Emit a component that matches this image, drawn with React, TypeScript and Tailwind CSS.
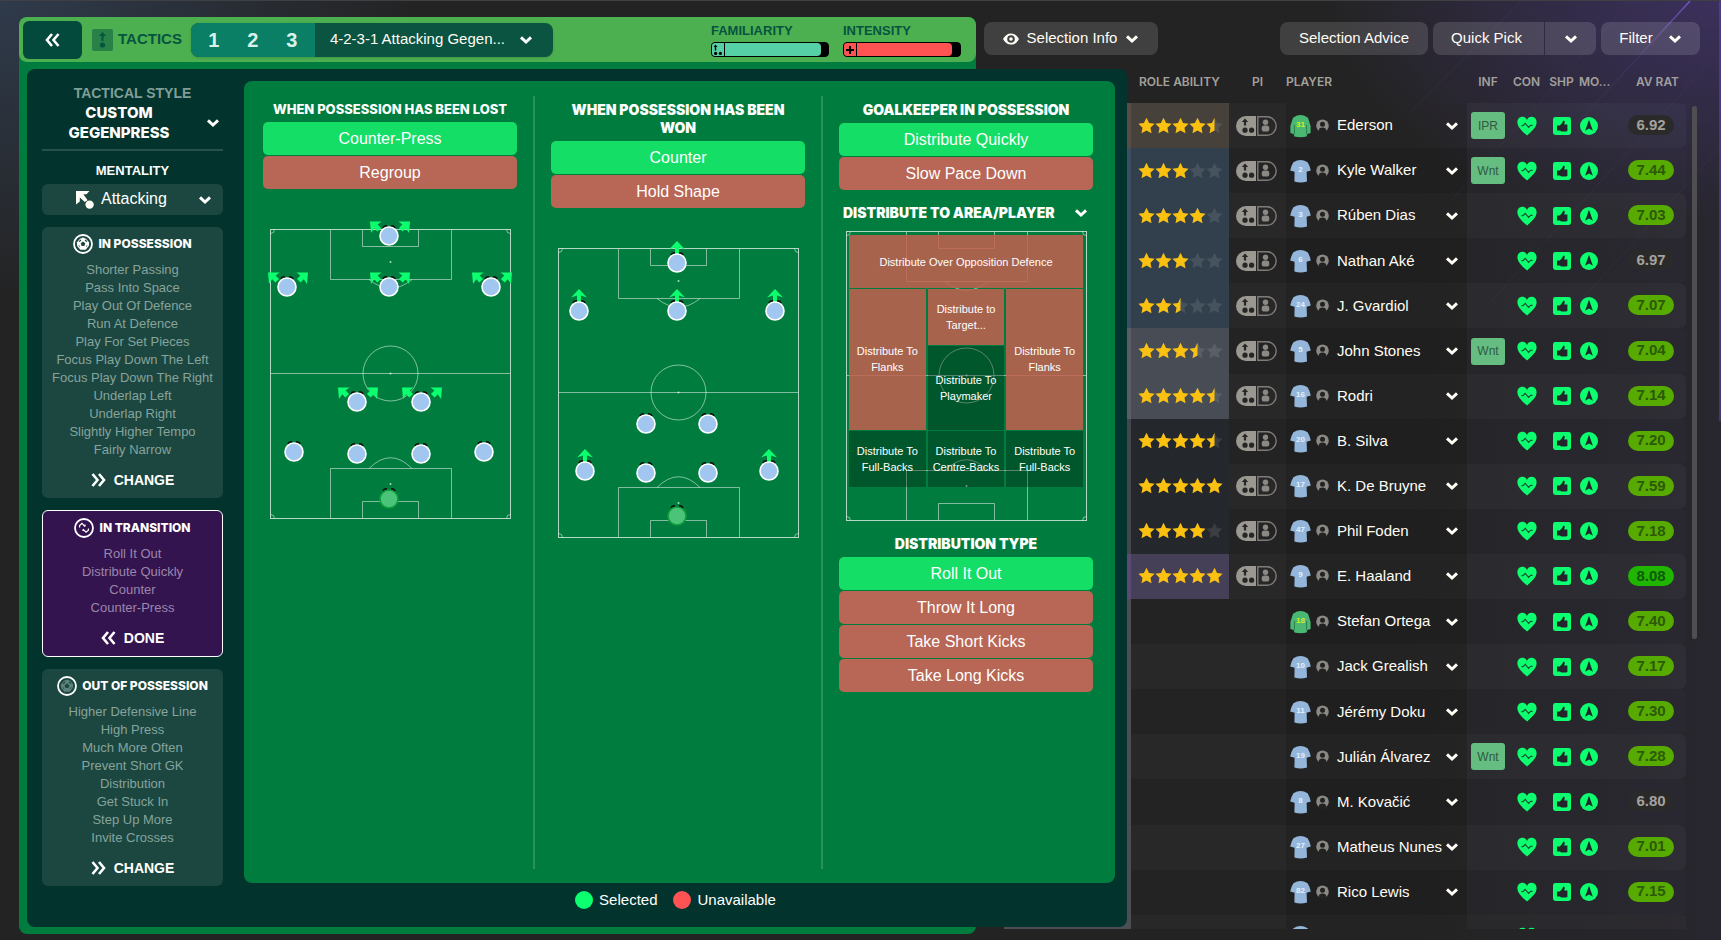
import React from 'react';
import clsx from 'clsx';

type Group = 'gk' | 'def' | 'mid' | 'am' | 'st' | 'none';

interface Player {
  name: string;
  shirt: number;
  group: Group;
  keeper?: boolean;
  stars?: number;
  info?: string;
  rating: string;
}

const players: Player[] = [
  { name: 'Ederson', shirt: 31, group: 'gk', keeper: true, stars: 4.5, info: 'IPR', rating: '6.92' },
  { name: 'Kyle Walker', shirt: 2, group: 'def', stars: 3, info: 'Wnt', rating: '7.44' },
  { name: 'Rúben Dias', shirt: 3, group: 'def', stars: 4, rating: '7.03' },
  { name: 'Nathan Aké', shirt: 6, group: 'def', stars: 3, rating: '6.97' },
  { name: 'J. Gvardiol', shirt: 24, group: 'def', stars: 2.5, rating: '7.07' },
  { name: 'John Stones', shirt: 5, group: 'mid', stars: 3.5, info: 'Wnt', rating: '7.04' },
  { name: 'Rodri', shirt: 16, group: 'mid', stars: 4.5, rating: '7.14' },
  { name: 'B. Silva', shirt: 20, group: 'am', stars: 4.5, rating: '7.20' },
  { name: 'K. De Bruyne', shirt: 17, group: 'am', stars: 5, rating: '7.59' },
  { name: 'Phil Foden', shirt: 47, group: 'am', stars: 4, rating: '7.18' },
  { name: 'E. Haaland', shirt: 9, group: 'st', stars: 5, rating: '8.08' },
  { name: 'Stefan Ortega', shirt: 18, group: 'none', keeper: true, rating: '7.40' },
  { name: 'Jack Grealish', shirt: 10, group: 'none', rating: '7.17' },
  { name: 'Jérémy Doku', shirt: 11, group: 'none', rating: '7.30' },
  { name: 'Julián Álvarez', shirt: 19, group: 'none', info: 'Wnt', rating: '7.28' },
  { name: 'M. Kovačić', shirt: 8, group: 'none', rating: '6.80' },
  { name: 'Matheus Nunes', shirt: 27, group: 'none', rating: '7.01' },
  { name: 'Rico Lewis', shirt: 82, group: 'none', rating: '7.15' },
];

const groupColors: Record<Group, { edge: string; cell: string }> = {
  gk: { edge: 'bg-[#584d46]', cell: 'bg-[#46413b]' },
  def: { edge: 'bg-[#3a4f64]', cell: 'bg-[#31404c]' },
  mid: { edge: 'bg-[#5a5d66]', cell: 'bg-[#484d55]' },
  am: { edge: 'bg-[#44464e]', cell: 'bg-[#24282c]' },
  st: { edge: 'bg-[#5a4b72]', cell: 'bg-[#463f58]' },
  none: { edge: 'bg-[#4d4d54]', cell: '' },
};

const inPossession = [
  'Shorter Passing',
  'Pass Into Space',
  'Play Out Of Defence',
  'Run At Defence',
  'Play For Set Pieces',
  'Focus Play Down The Left',
  'Focus Play Down The Right',
  'Underlap Left',
  'Underlap Right',
  'Slightly Higher Tempo',
  'Fairly Narrow',
];

const inTransition = ['Roll It Out', 'Distribute Quickly', 'Counter', 'Counter-Press'];

const outOfPossession = [
  'Higher Defensive Line',
  'High Press',
  'Much More Often',
  'Prevent Short GK Distribution',
  'Get Stuck In',
  'Step Up More',
  'Invite Crosses',
];

const Chevron = ({ className }: { className?: string }) => (
  <svg width="14" height="10" viewBox="0 0 14 10" fill="none" className={clsx('shrink-0', className)} aria-hidden="true">
    <path d="M2 2.4 L7 7 L12 2.4" stroke="currentColor" strokeWidth="3" />
  </svg>
);

const DoubleChevron = ({ left }: { left?: boolean }) => (
  <svg width="15" height="14" viewBox="0 0 15 14" fill="none" className={clsx('shrink-0', left && 'rotate-180')} aria-hidden="true">
    <path d="M1.5 1 L6.5 7 L1.5 13 M8 1 L13 7 L8 13" stroke="currentColor" strokeWidth="2.6" />
  </svg>
);

const BallIcon = ({ dim }: { dim?: boolean }) => (
  <svg width="20" height="20" viewBox="0 0 20 20" aria-hidden="true">
    <circle cx="10" cy="10" r="9" fill="none" stroke="#fff" strokeWidth="1.8" />
    <g fill={dim ? '#6d8f89' : '#fff'} opacity={dim ? 0.8 : 1}>
      <path
        fillRule="evenodd"
        d="M10 3.6 L13 4.8 L16.2 8.6 L15.8 12 L12.6 15.8 H7.4 L4.2 12 L3.8 8.6 L7 4.8 Z M10 7.6 L7.7 9.3 L8.6 12 H11.4 L12.3 9.3 Z M7.4 5.6 L8.4 6.6 L6.6 7.9 L5.6 7.6 Z M12.6 5.6 L14.4 7.6 L13.4 7.9 L11.6 6.6 Z M5.4 11.2 L6.6 11.6 L7 13.6 Z M14.6 11.2 L13 13.6 L13.4 11.6 Z"
      />
    </g>
  </svg>
);

const TransitionIcon = () => (
  <svg width="20" height="20" viewBox="0 0 20 20" fill="none" stroke="#fff" aria-hidden="true">
    <circle cx="10" cy="10" r="9" strokeWidth="1.8" />
    <path d="M5.6 9.6 V7.6 L8 5.4 L11 8.6 M11 6.6 V8.6 M9 11.2 L12 14.2 L14.4 12.2 V10.6 M9 11.2 V13" strokeWidth="1.2" />
  </svg>
);

const Star = ({ fill }: { fill: number }) => {
  const d = 'M8 0.8 L10.3 5.5 L15.4 6.2 L11.6 9.8 L12.6 14.9 L8 12.4 L3.4 14.9 L4.4 9.8 L0.6 6.2 L5.7 5.5 Z';
  return (
    <svg width="17" height="17" viewBox="0.2 0 15.6 15.6" aria-hidden="true">
      <path d={d} fill="#fff" fillOpacity="0.1" />
      {fill > 0 && <path d={fill === 1 ? d : 'M8 0.8 L8 12.4 L3.4 14.9 L4.4 9.8 L0.6 6.2 L5.7 5.5 Z'} fill="#fbc110" />}
    </svg>
  );
};

const InstructionIcon = () => (
  <svg width="41" height="20" viewBox="0 0 41 20" aria-hidden="true">
    <path d="M20 0 H10 A10 10 0 0 0 10 20 H20 Z" fill="#9b9791" />
    <path d="M9 2.5 L12.2 6 H10.1 V9.5 H7.9 V6 H5.8 Z" fill="#262626" />
    <circle cx="9" cy="14.2" r="2.6" fill="#262626" />
    <circle cx="15.6" cy="14.2" r="2.6" fill="#262626" />
    <path d="M21.8 0.8 H31 A9.2 9.2 0 0 1 31 19.2 H21.8 Z" fill="none" stroke="#7f7c78" strokeWidth="1.4" />
    <circle cx="29.5" cy="6.2" r="2.7" fill="#8c8984" />
    <rect x="25.7" y="9.6" width="7.6" height="6" rx="2.6" fill="#8c8984" />
  </svg>
);

const Shirt = ({ number, keeper }: { number?: number; keeper?: boolean }) => (
  <svg width="21" height="24" viewBox="0 0 21 24" className="shrink-0" aria-hidden="true">
    {keeper ? (
      <>
        <path d="M7 1.4 Q10.5 0.4 14 1.4 L18 3.8 L20.6 12 V19 L17.4 20 L16.6 22.6 Q10.5 23.8 4.4 22.6 L3.6 20 L0.4 19 V12 L3 3.8 Z" fill="#4ab873" />
        <path d="M4.4 11 V20.4 M16.6 11 V20.4" stroke="#2c7d4b" strokeWidth="1" />
      </>
    ) : (
      <path d="M7 1.4 Q10.5 0.4 14 1.4 L17.6 3.2 Q19.8 6.6 20.8 11.4 L16.6 12.8 L17 22.6 Q10.5 24.4 4.4 22.6 L4.6 12.8 L0.2 11.4 Q1.2 6.6 3.4 3.2 Z" fill="#94b6da" />
    )}
    <text x="10.5" y="13" textAnchor="middle" fontSize="8" fontWeight="700" fill={keeper ? '#d2ee22' : '#e6f0fb'}>
      {number}
    </text>
  </svg>
);

const PersonIcon = () => (
  <svg width="13" height="14" viewBox="0 0 13 14" className="mr-2 ml-[5px] shrink-0" aria-hidden="true">
    <circle cx="6.5" cy="6.8" r="6.3" fill="#8c8883" />
    <circle cx="6.5" cy="5.2" r="2.5" fill="#222" />
    <path d="M2.6 14 V11.6 Q3 8.8 6.5 8.6 Q10 8.8 10.4 11.6 V14 Z" fill="#222" />
  </svg>
);

const HeartIcon = () => (
  <svg width="20" height="20" viewBox="0 0 20 20" className="mx-auto block" aria-hidden="true">
    <path d="M10 19.6 C4.4 14.4 0.4 10.8 0.4 6.2 C0.4 3 2.6 0.8 5.4 0.8 C7.6 0.8 9.2 2 10 4 C10.8 2 12.4 0.8 14.6 0.8 C17.4 0.8 19.6 3 19.6 6.2 C19.6 10.8 15.6 14.4 10 19.6 Z" fill="#0cff6e" />
    <path d="M4.4 9.6 H6 L8.2 7.4 L11.6 11.4 L13.6 9.4 H15.6" fill="none" stroke="#1b5437" strokeWidth="1.2" />
  </svg>
);

const ThumbIcon = () => (
  <svg width="18" height="18" viewBox="0 0 18 18" className="mx-auto block" aria-hidden="true">
    <rect width="18" height="18" rx="2.4" fill="#0cff6e" />
    <path d="M10.3 3.4 Q12 3.4 11.8 5 L11.2 7.6 H14.4 V14 L12.8 14.6 H8.4 L6.8 13.6 H4 V8.4 H6.8 Q9.4 6.4 10.3 3.4 Z" fill="#22262a" />
  </svg>
);

const MoraleIcon = () => (
  <svg width="18" height="18" viewBox="0 0 18 18" className="block" aria-hidden="true">
    <circle cx="9" cy="9" r="9" fill="#0cff6e" />
    <path d="M9 2.8 L12.9 13.8 L9 11.6 L5.1 13.8 Z" fill="#22262a" />
  </svg>
);

type Marker = { x: number; y: number; arrows?: 'wide' | 'up'; keeper?: boolean };

const lostMarkers: Marker[] = [
  { x: 119, y: 7, arrows: 'wide' },
  { x: 17, y: 58, arrows: 'wide' },
  { x: 119, y: 58, arrows: 'wide' },
  { x: 221, y: 58, arrows: 'wide' },
  { x: 87, y: 173, arrows: 'wide' },
  { x: 151, y: 173, arrows: 'wide' },
  { x: 24, y: 223 },
  { x: 87, y: 225 },
  { x: 151, y: 225 },
  { x: 214, y: 223 },
  { x: 119, y: 270, keeper: true },
];

const wonMarkers: Marker[] = [
  { x: 119, y: 15, arrows: 'up' },
  { x: 21, y: 63, arrows: 'up' },
  { x: 119, y: 63, arrows: 'up' },
  { x: 217, y: 63, arrows: 'up' },
  { x: 88, y: 176 },
  { x: 150, y: 176 },
  { x: 27, y: 223, arrows: 'up' },
  { x: 88, y: 225 },
  { x: 150, y: 225 },
  { x: 211, y: 223, arrows: 'up' },
  { x: 119, y: 268, keeper: true },
];

const Pitch = ({ markers = [] }: { markers?: Marker[] }) => (
  <svg viewBox="0 0 241 290" className="block w-full overflow-visible" aria-hidden="true">
    <g fill="none" stroke="#fff" strokeOpacity="0.5">
      <path d="M60.5 1 V50.5 H181.5 V1 M92.5 1 V17.5 H148.5 V1 M99 50.5 Q120.5 68 142 50.5" />
      <path d="M60.5 289 V239.5 H181.5 V289 M92.5 289 V272.5 H148.5 V289 M99 239.5 Q120.5 218 142 239.5" />
      <path d="M1 144.5 H240" />
      <circle cx="120.5" cy="144.5" r="27.5" />
      <path d="M0.5 4.5 A4 4 0 0 0 4.5 0.5 M236.5 0.5 A4 4 0 0 0 240.5 4.5 M0.5 285.5 A4 4 0 0 1 4.5 289.5 M236.5 289.5 A4 4 0 0 1 240.5 285.5" />
      <rect x="0.5" y="0.5" width="240" height="289" strokeOpacity="0.7" />
    </g>
    <g fill="#fff" fillOpacity="0.7">
      <circle cx="120.5" cy="33" r="1" />
      <circle cx="120.5" cy="144.5" r="1" />
      <circle cx="120.5" cy="255" r="1" />
    </g>
    {markers.map((m) => (
      <g key={`${m.x}-${m.y}`} transform={`translate(${m.x} ${m.y})`}>
        {m.arrows === 'wide' && (
          <g fill="#0cff6e">
            <path d="M-19 -14.5 L-7.5 -14.5 L-11.4 -11.4 L-8 -8 L-11.6 -4.6 L-14.8 -7.8 L-18 -3 Z" />
            <path d="M21 -14.5 L9.5 -14.5 L13.4 -11.4 L10 -8 L13.6 -4.6 L16.8 -7.8 L20 -3 Z" />
          </g>
        )}
        {m.arrows === 'up' && <path d="M0 -22 L8 -13.6 L2 -15.5 V-8 H-2 V-15.5 L-8 -13.6 Z" fill="#0cff6e" />}
        <path d="M-6 -8 Q-5 -10.6 -2 -10 M6 -8 Q5 -10.6 2 -10" fill="none" stroke="#111" strokeWidth="1.8" />
        <circle r="9" fill={m.keeper ? '#4bc47a' : '#a1c6ef'} stroke={m.keeper ? '#0f9c3c' : '#fff'} strokeWidth="1.6" />
      </g>
    ))}
  </svg>
);

const ColumnTitle = ({ small, children }: { small?: boolean; children: React.ReactNode }) => (
  <h2
    className={clsx(
      "text-center font-[Inter,'Liberation_Sans',sans-serif] leading-[18px]",
      small ? 'text-[13px] font-extrabold whitespace-nowrap' : 'px-3 text-sm font-black'
    )}
  >
    {children}
  </h2>
);

const Options = ({ items }: { items: string[] }) => (
  <div className="flex flex-col gap-px">
    {items.map((item, i) => (
      <button
        key={item}
        className={clsx('h-[33px] rounded-[5px] text-base leading-8', i === 0 ? 'bg-[#14de66]' : 'bg-[#b86655]')}
      >
        {item}
      </button>
    ))}
  </div>
);

interface PhaseProps {
  title: string;
  icon: React.ReactNode;
  items: string[];
  active?: boolean;
}

const PhaseCard = ({ title, icon, items, active }: PhaseProps) => (
  <section
    className={clsx(
      'flex flex-col items-center rounded-md px-2.5 pt-[7px] pb-2 text-center',
      active ? 'border border-white bg-[#34144f]' : 'bg-[#1c4740]'
    )}
  >
    <h3 className="flex h-5 items-center gap-[5px] font-[Inter,'Liberation_Sans',sans-serif] text-xs font-extrabold whitespace-nowrap">
      {icon}
      {title}
    </h3>
    <ul className={clsx('mt-[7px] text-[13px] leading-[18px]', active ? 'text-[#9a86ab]' : 'text-[#86a39c]')}>
      {items.map((item) => (
        <li key={item}>{item}</li>
      ))}
    </ul>
    <button className="mt-[11px] flex h-5 items-center gap-2 text-sm font-bold">
      <DoubleChevron left={active} />
      {active ? 'DONE' : 'CHANGE'}
    </button>
  </section>
);

const Zone = ({ wide, tall, open, children }: { wide?: boolean; tall?: boolean; open?: boolean; children: React.ReactNode }) => (
  <button
    className={clsx(
      'flex items-center justify-center text-center text-[11px] leading-4',
      open ? 'bg-black/30' : 'bg-[#c65e50]/85',
      wide && 'col-span-3',
      tall && 'row-span-2'
    )}
  >
    {children}
  </button>
);

const Meter = ({ label, color, level, children }: { label: string; color: string; level: number; children: React.ReactNode }) => (
  <div className="w-[118px]">
    <p className="text-[13px] leading-[18px] font-bold text-[#07543f]">{label}</p>
    <div
      role="meter"
      aria-label={label}
      aria-valuenow={level}
      className="mt-0.5 flex h-[15px] rounded-[4px] border border-black bg-black"
    >
      <span className={clsx('flex w-3 items-center justify-center rounded-l-[3px]', color)}>{children}</span>
      <div className="ml-px flex-1">
        <div className={clsx('h-full rounded-r-[4px]', color)} style={{ width: `${level}%` }} />
      </div>
    </div>
  </div>
);

const TacticsDialog = () => (
  <div role="dialog" aria-label="Team instructions" className="absolute top-[52px] -right-[151px] bottom-[7px] left-2 z-10 flex gap-[21px] rounded-lg bg-[#02332c] pr-3 pl-[15px]">
    <aside className="w-[181px] shrink-0 pt-3.5">
      <button className="w-full font-[Inter,'Liberation_Sans',sans-serif] text-[15px] leading-5 font-extrabold">
        <span className="block text-center font-['Liberation_Sans',Arial,sans-serif] text-sm leading-5 font-bold text-[#7f9e97]">
          TACTICAL STYLE
        </span>
        <span className="flex items-center pr-[3px]">
          <span className="flex-1 pr-[26px] pl-4">CUSTOM GEGENPRESS</span>
          <Chevron />
        </span>
      </button>
      <hr className="mt-1.5 border-t-2 border-[#27524b]" />
      <label htmlFor="mentality" className="mt-2.5 block text-center text-[13px] leading-5 font-bold">
        MENTALITY
      </label>
      <div className="mt-[3px] flex h-[31px] items-center rounded-md bg-[#1c4740] pr-[11px] pl-[34px]">
        <svg width="18" height="18" viewBox="0 0 18 18" fill="#fffdf5" aria-hidden="true">
          <path d="M0 0 H13.4 L10.6 3.2 H7.4 L11.6 9.2 L8.8 11 L3.8 6.4 V10.6 L0 13.6 Z" />
          <circle cx="13.6" cy="13.6" r="4.2" />
        </svg>
        <select id="mentality" className="ml-[7px] flex-1 appearance-none bg-transparent pb-px text-base">
          <option>Attacking</option>
        </select>
        <Chevron />
      </div>
      <div className="mt-3 flex flex-col gap-3">
        <PhaseCard title="IN POSSESSION" icon={<BallIcon />} items={inPossession} />
        <PhaseCard title="IN TRANSITION" icon={<TransitionIcon />} items={inTransition} active />
        <PhaseCard title="OUT OF POSSESSION" icon={<BallIcon dim />} items={outOfPossession} />
      </div>
    </aside>

    <div className="flex min-w-0 flex-1 flex-col pt-3">
      <div className="grid flex-1 grid-cols-3 rounded-lg bg-[#007d3e] pt-[15px] pr-[6px] pb-3.5 pl-px">
        <div className="pt-1 pr-4 pl-[18px]">
          <ColumnTitle small>WHEN POSSESSION HAS BEEN LOST</ColumnTitle>
          <div className="mt-1">
            <Options items={['Counter-Press', 'Regroup']} />
          </div>
          <div className="mt-10 pr-1.5 pl-[7px]">
            <Pitch markers={lostMarkers} />
          </div>
        </div>

        <div className="border-l-2 border-[#2a9258] pt-[5px] pr-4 pl-4">
          <ColumnTitle>WHEN POSSESSION HAS BEEN WON</ColumnTitle>
          <div className="mt-1">
            <Options items={['Counter', 'Hold Shape']} />
          </div>
          <div className="mt-10 pr-1.5 pl-[7px]">
            <Pitch markers={wonMarkers} />
          </div>
        </div>

        <div className="border-l-2 border-[#2a9258] pt-[5px] pr-4 pl-4">
          <ColumnTitle>GOALKEEPER IN POSSESSION</ColumnTitle>
          <div className="mt-1">
            <Options items={['Distribute Quickly', 'Slow Pace Down']} />
          </div>
          <button className="mt-3.5 flex w-full items-center justify-between pr-[5px] pl-1 font-[Inter,'Liberation_Sans',sans-serif] text-sm leading-[18px] font-black">
            DISTRIBUTE TO AREA/PLAYER
            <Chevron />
          </button>
          <div className="relative mt-[9px] pr-1.5 pl-[7px]">
            <Pitch />
            {/* Distribution zones laid over the pitch */}
            <div className="absolute inset-x-2.5 top-1 bottom-[34px] grid grid-cols-3 grid-rows-[53fr_55fr_83fr_56fr] gap-x-0.5 gap-y-px">
              <Zone wide>Distribute Over Opposition Defence</Zone>
              <Zone tall>Distribute To Flanks</Zone>
              <Zone>Distribute to Target...</Zone>
              <Zone tall>Distribute To Flanks</Zone>
              <Zone open>Distribute To Playmaker</Zone>
              <Zone open>Distribute To Full-Backs</Zone>
              <Zone open>Distribute To Centre-Backs</Zone>
              <Zone open>Distribute To Full-Backs</Zone>
            </div>
          </div>
          <div className="mt-3.5">
            <ColumnTitle>DISTRIBUTION TYPE</ColumnTitle>
          </div>
          <div className="mt-1">
            <Options items={['Roll It Out', 'Throw It Long', 'Take Short Kicks', 'Take Long Kicks']} />
          </div>
        </div>
      </div>
      <div className="flex h-11 items-center justify-center gap-4 pr-2 pb-2.5 text-[15px]">
        <span className="flex items-center gap-1.5">
          <i className="size-[18px] rounded-full bg-[#0cff6e]" />
          Selected
        </span>
        <span className="flex items-center gap-1.5">
          <i className="size-[18px] rounded-full bg-[#ff5353]" />
          Unavailable
        </span>
      </div>
    </div>
  </div>
);

const ratingColor = (rating: string) => {
  const value = Number(rating);
  if (value >= 8) return 'bg-[#1fb500] text-[#0f5a08]';
  if (value >= 7) return 'bg-[#56aa00] text-[#2c5a08]';
  return 'bg-[#2a2a2a] text-[#a5a29e]';
};

const PlayerRow = ({ player }: { player: Player }) => {
  const colors = groupColors[player.group];
  return (
    <tr className="h-[45px] odd:bg-white/[0.025]">
      <td className={colors.edge} />
      <td className={clsx('pb-px pl-[7px]', colors.cell)}>
        {player.stars && (
          <span className="flex" role="img" aria-label={`${player.stars} stars`}>
            {[0, 1, 2, 3, 4].map((i) => (
              <Star key={i} fill={Math.max(0, Math.min(1, player.stars! - i))} />
            ))}
          </span>
        )}
      </td>
      <td className="pl-[7px]">{player.stars && <InstructionIcon />}</td>
      <td className="bg-black/10">
        <div className="flex items-center pr-2 pl-1">
          <Shirt number={player.shirt} keeper={player.keeper} />
          <PersonIcon />
          <span className="flex-1 text-[15px] whitespace-nowrap text-[#fffdf5]">{player.name}</span>
          <button aria-label={`${player.name} options`} className="text-[#fffdf5]">
            <Chevron />
          </button>
        </div>
      </td>
      <td className="bg-[#8080ff]/2 pl-1">
        {player.info && (
          <span className="flex h-[27px] w-[34px] items-center justify-center rounded-[3px] bg-[#66bd81] text-xs text-[#2e5a42]">
            {player.info}
          </span>
        )}
      </td>
      <td className="bg-[#8080ff]/2"><HeartIcon /></td>
      <td className="bg-[#8080ff]/2"><ThumbIcon /></td>
      <td className="bg-[#8080ff]/2 pl-px"><MoraleIcon /></td>
      <td className="rounded-r-md bg-[#8080ff]/2 pb-px pl-4">
        <span className={clsx('flex h-5 w-[46px] items-center justify-center rounded-full text-[15px] font-bold', ratingColor(player.rating))}>
          {player.rating}
        </span>
      </td>
    </tr>
  );
};

const toolbarButton = 'flex h-[33px] items-center bg-white/[0.13] text-[15px] text-[#fffdf5]';

const Squad = () => (
  <section className="relative flex min-h-0 min-w-0 flex-col pt-[5px] pb-[5px] pl-2">
    <div className="flex shrink-0 pr-[21px]">
      <button className={clsx(toolbarButton, 'w-[174px] justify-center gap-2 rounded-lg')}>
        <svg width="16" height="12" viewBox="0 0 16 12" fill="currentColor" aria-hidden="true">
          <path fillRule="evenodd" d="M0 6 Q3 0.4 8 0.4 T16 6 Q13 11.6 8 11.6 T0 6 Z M8 2.2 A3.8 3.8 0 1 0 8 9.8 A3.8 3.8 0 1 0 8 2.2 Z" />
          <circle cx="8" cy="6" r="1.8" />
        </svg>
        Selection Info
        <Chevron />
      </button>
      <div className="ml-auto flex gap-[5px]">
        <button className={clsx(toolbarButton, 'w-[148px] justify-center rounded-lg')}>Selection Advice</button>
        <div className="flex gap-px">
          <button className={clsx(toolbarButton, 'w-[111px] justify-center rounded-l-lg pr-1')}>Quick Pick</button>
          <button aria-label="Quick pick options" className={clsx(toolbarButton, 'w-[51px] justify-center rounded-r-lg')}>
            <Chevron />
          </button>
        </div>
        <button className={clsx(toolbarButton, 'w-[99px] justify-center gap-[15px] rounded-lg')}>
          Filter
          <Chevron />
        </button>
      </div>
    </div>

    <div className="mt-2 flex min-h-0 flex-1 pr-6 pl-5">
      <div className="min-w-0 flex-1 overflow-hidden">
        <table className="h-[calc(100%+31px)] w-full table-fixed">
          <colgroup>
            <col className="w-[127px]" />
            <col className="w-[98px]" />
            <col className="w-[57px]" />
            <col />
            <col className="w-[42px]" />
            <col className="w-[35px]" />
            <col className="w-[35px]" />
            <col className="w-[33px]" />
            <col className="w-[74px]" />
          </colgroup>
          <thead>
            <tr className="h-10 text-left font-[Inter,'Liberation_Sans',sans-serif] text-xs whitespace-nowrap text-[#a3a09c]">
              <th aria-label="Position" />
              <th className="pb-0.5 pl-2 font-semibold">ROLE ABILITY</th>
              <th className="pb-0.5 text-center font-semibold">PI</th>
              <th className="pb-0.5 font-semibold">PLAYER</th>
              <th className="pb-0.5 text-center font-semibold">INF</th>
              <th className="pb-0.5 text-center font-semibold">CON</th>
              <th className="pb-0.5 text-center font-semibold">SHP</th>
              <th className="pb-0.5 font-semibold">MO...</th>
              <th className="pr-[7px] pb-0.5 text-right font-semibold">AV RAT</th>
            </tr>
          </thead>
          <tbody>
            {players.map((player) => (
              <PlayerRow key={player.name} player={player} />
            ))}
            {/* Next row, cut off by the bottom of the list */}
            <tr className="h-[45px] bg-white/[0.025]">
              <td className="bg-[#4d4d54]" />
              <td colSpan={2} />
              <td className="bg-black/10 pl-1"><Shirt /></td>
              <td />
              <td><HeartIcon /></td>
              <td colSpan={3} />
            </tr>
          </tbody>
        </table>
      </div>
      <div className="mt-[43px] ml-1.5 h-[533px] w-[5px] rounded-full bg-[#4f4e51]" />
    </div>
  </section>
);

// Faint light streaks in the top right corner
const Streaks = () => (
  <svg width="400" height="420" viewBox="0 0 400 420" fill="none" className="pointer-events-none absolute top-0 right-0" aria-hidden="true">
    <defs>
      <linearGradient id="streak" x1="1" y1="0" x2="0" y2="1">
        <stop offset="0" stopColor="#7b62e0" stopOpacity="0.8" />
        <stop offset="0.4" stopColor="#5a4a9c" stopOpacity="0.2" />
        <stop offset="1" stopColor="#5a4a9c" stopOpacity="0" />
      </linearGradient>
    </defs>
    <path d="M369 0 L240 140" stroke="url(#streak)" strokeWidth="1.5" />
    <g stroke="#6b58b8" strokeOpacity="0.12">
      <path d="M310 0 L130 200" />
      <path d="M390 60 L170 300" />
      <path d="M396 150 L250 310" />
      <path d="M200 0 L90 110" />
    </g>
    <rect x="398" width="2" height="420" fill="#5c4bb0" fillOpacity="0.5" />
  </svg>
);

const App: React.FC = () => {
  return (
    <div className="relative grid h-screen grid-cols-[957fr_745fr] grid-rows-[minmax(0,1fr)] overflow-hidden border-t border-[#3f4044] bg-[#232323] bg-[radial-gradient(ellipse_420px_300px_at_0_0,#2f3a4b,transparent),radial-gradient(ellipse_400px_220px_at_100%_0,#3b305c,transparent),linear-gradient(90deg,transparent_82%,#28262e)] pt-4 pb-1.5 pl-[19px] font-['Liberation_Sans',Arial,sans-serif] text-white">
      <Streaks />
      <main className="relative rounded-lg bg-[#007d3e]">
        <header className="flex h-[45px] items-center rounded-lg bg-[#4caf50] pr-[15px] pl-1">
          <button aria-label="Back" className="flex h-[38px] w-[59px] items-center justify-center rounded-md bg-[#03493c]">
            <DoubleChevron left />
          </button>
          <svg width="21" height="22" viewBox="0 0 21 22" className="ml-2.5" aria-hidden="true">
            <rect width="21" height="22" rx="2" fill="#2a8148" />
            <path d="M10.5 3 L14 7 H11.5 V12 H9.5 V7 H7 Z" fill="#07543f" />
            <circle cx="10.5" cy="16" r="2.6" fill="#07543f" />
          </svg>
          <h1 className="ml-[5px] text-[15px] font-bold text-[#07543f]">TACTICS</h1>
          <div className="ml-[9px] flex h-[34px] overflow-hidden rounded-lg bg-[#0a5441] shadow">
            <div className="flex w-[124px] items-center justify-center gap-3 bg-[#0a7f66] text-xl font-bold text-[#d8f2ea]">
              <button className="w-[27px]">1</button>
              <button className="w-[27px]">2</button>
              <button className="w-[27px]">3</button>
            </div>
            <div className="flex items-center pr-5 pl-[15px]">
              <select aria-label="Tactic" className="w-[189px] appearance-none bg-transparent text-[15px] text-[#fffdf5]">
                <option>4-2-3-1 Attacking Gegen...</option>
              </select>
              <Chevron />
            </div>
          </div>
          <div className="ml-auto flex gap-3.5">
            <Meter label="FAMILIARITY" color="bg-[#56d1a7]" level={93}>
              <svg width="10" height="12" viewBox="0 0 10 12" aria-hidden="true">
                <path d="M2.5 0.5 L4.5 3 H3.2 V6.4 H1.8 V3 H0.5 Z" />
                <circle cx="2.6" cy="9.4" r="1.6" />
                <circle cx="7.4" cy="9.4" r="1.6" />
              </svg>
            </Meter>
            <Meter label="INTENSITY" color="bg-[#ff5353]" level={92}>
              <svg width="8" height="8" viewBox="0 0 8 8" aria-hidden="true">
                <path d="M3 0 H5 V3 H8 V5 H5 V8 H3 V5 H0 V3 H3 Z" />
              </svg>
            </Meter>
          </div>
        </header>
        <TacticsDialog />
      </main>
      <Squad />
    </div>
  );
};

export default App;
